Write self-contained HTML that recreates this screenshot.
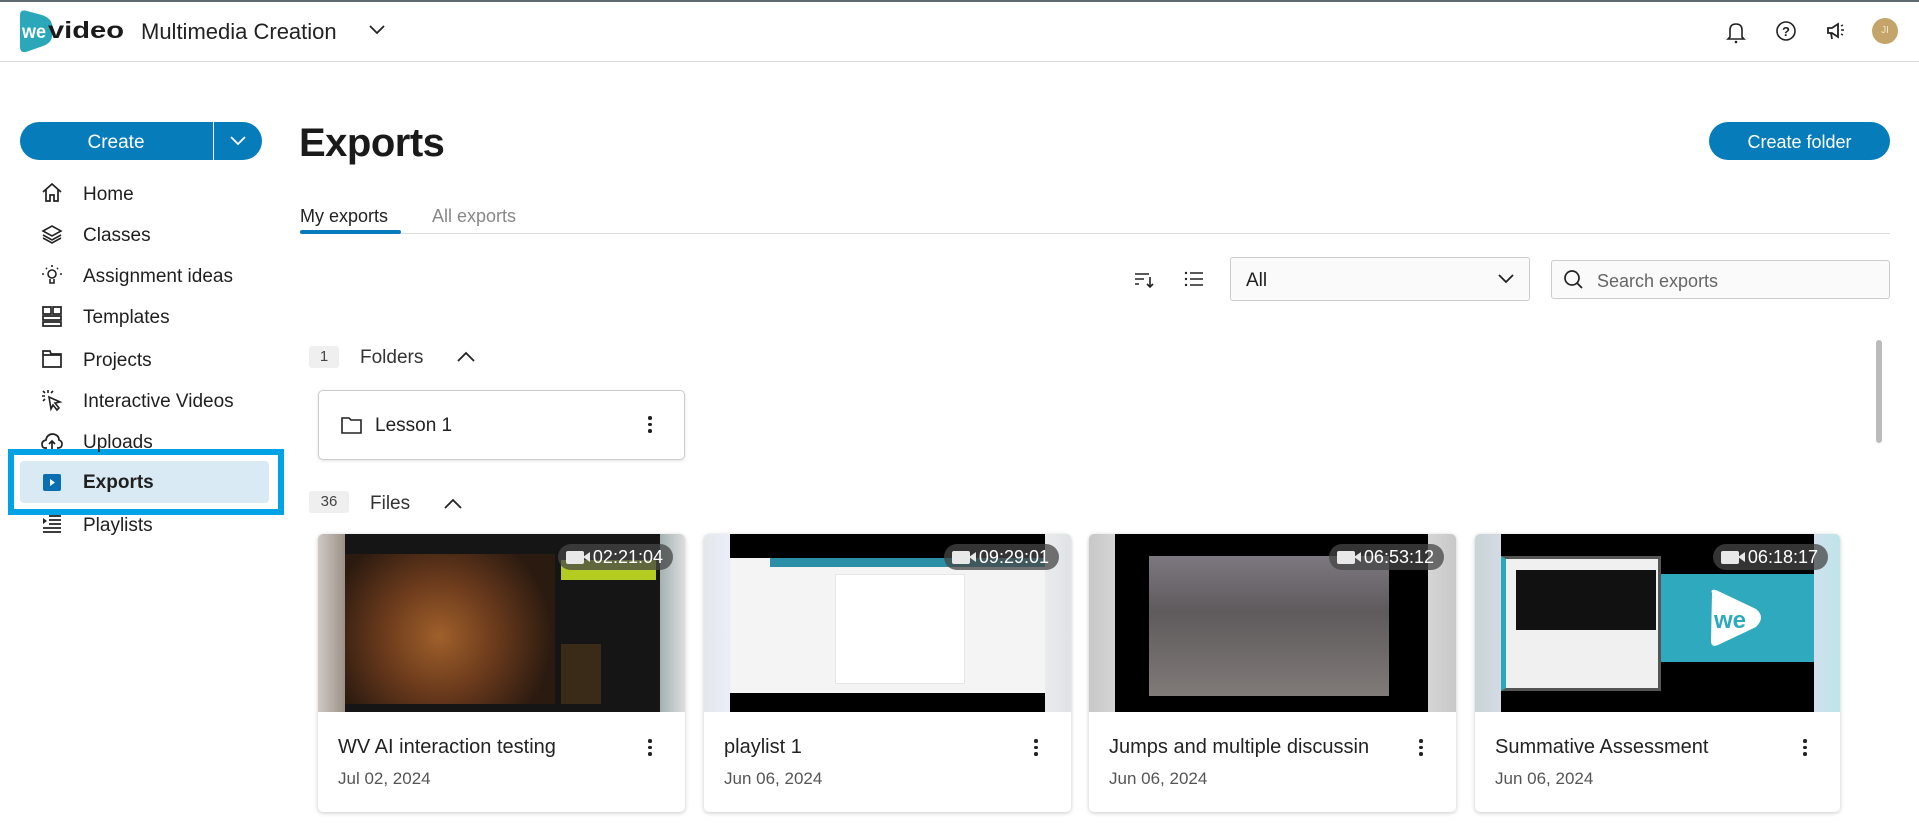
<!DOCTYPE html>
<html><head><meta charset="utf-8"><style>
*{box-sizing:border-box;margin:0;padding:0}
body{width:1919px;height:825px;overflow:hidden;background:#fff;font-family:"Liberation Sans",sans-serif;color:#1f1f1f;position:relative}
.a{position:absolute}
.hdr{left:0;top:0;width:1919px;height:62px;border-top:2px solid #5b6a73;border-bottom:1px solid #dcdcdc}
.nav{left:83px;font-size:19px;color:#1f1f1f;white-space:nowrap}
.ico{left:40px;width:24px;height:24px}
.card{background:#fff;border-radius:5px;box-shadow:0 1px 4px rgba(0,0,0,.22);overflow:hidden}
.thumb{position:absolute;left:0;top:0;width:100%;height:178px;background:#cfd3d3}
.vid{position:absolute;top:0;height:178px}
.dur{position:absolute;right:12px;top:10px;height:26px;padding:0 10px 0 8px;border-radius:13px;background:rgba(70,70,70,.75);color:#fff;font-size:18px;line-height:26px;display:flex;align-items:center;gap:5px}
.cam{width:18px;height:13px;background:#e8e8e8;border-radius:2px;position:relative;margin-right:4px}
.cam:after{content:"";position:absolute;right:-6px;top:1px;border-right:7px solid #e8e8e8;border-top:5px solid transparent;border-bottom:5px solid transparent}
.ct{position:absolute;left:20px;top:202px;font-size:20px;color:#222;white-space:nowrap;width:300px;overflow:hidden}
.cd{position:absolute;left:20px;top:235px;font-size:17px;color:#555}
.dots{position:absolute;right:33px;top:205px;width:4px}
.dots i{display:block;width:3.5px;height:3.5px;border-radius:50%;background:#222;margin-bottom:3px}
.badge{background:#efefef;border-radius:3px;font-size:15px;color:#444;text-align:center;line-height:22px;height:22px}
</style></head><body>
<div class="a hdr"></div>
<svg class="a" style="left:18px;top:9px" width="110" height="44" viewBox="0 0 110 44">
<path d="M2 6 Q2 1 7 1.5 L24 6 Q33 9 34 16 L34 28 Q33 34 25 37 L8 43 Q2 44 2 38 Z" fill="#2aa7b9"/>
<text x="4" y="29" font-family="Liberation Sans" font-weight="bold" font-size="19" fill="#fff" textLength="24" lengthAdjust="spacingAndGlyphs">we</text>
<text x="30" y="29" font-family="Liberation Sans" font-weight="bold" font-size="23" fill="#1a1a1a" textLength="76" lengthAdjust="spacingAndGlyphs">video</text>
</svg>
<div class="a" style="left:141px;top:19px;font-size:22px;color:#222">Multimedia Creation</div>
<svg class="a" style="left:368px;top:24px" width="18" height="12" viewBox="0 0 18 12"><path d="M2 2 L9 9 L16 2" stroke="#222" stroke-width="1.8" fill="none"/></svg>
<svg class="a" style="left:1726px;top:20px" width="20" height="24" viewBox="0 0 20 24"><path d="M4 17 V10 Q4 4 10 4 Q16 4 16 10 V17 L18 19 H2 Z" stroke="#222" stroke-width="1.6" fill="none"/><circle cx="10" cy="22" r="1.3" fill="#222"/></svg>
<svg class="a" style="left:1775px;top:20px" width="22" height="22" viewBox="0 0 22 22"><circle cx="11" cy="11" r="9" stroke="#222" stroke-width="1.6" fill="none"/><text x="11" y="16" text-anchor="middle" font-family="Liberation Sans" font-weight="bold" font-size="13" fill="#222">?</text></svg>
<svg class="a" style="left:1825px;top:20px" width="22" height="22" viewBox="0 0 22 22"><path d="M3 8 H7 L13 4 V17 L7 13 H3 Z M6 13 L7 19" stroke="#222" stroke-width="1.8" fill="none"/><path d="M16 6 l2 -1 M16 10 h3 M16 14 l2 1" stroke="#222" stroke-width="1.5"/></svg>
<div class="a" style="left:1872px;top:18px;width:26px;height:26px;border-radius:50%;background:#c4a468;color:#f3e7cf;font-size:10px;text-align:center;line-height:26px">JI</div>
<div class="a" style="left:20px;top:122px;width:242px;height:38px;border-radius:19px;background:#077cbb"></div>
<div class="a" style="left:20px;top:124px;width:192px;height:38px;color:#fff;font-size:19px;text-align:center;line-height:38px">Create</div>
<div class="a" style="left:213px;top:122px;width:1px;height:38px;background:#fff"></div>
<svg class="a" style="left:229px;top:135px" width="18" height="12" viewBox="0 0 18 12"><path d="M2 2 L9 9 L16 2" stroke="#fff" stroke-width="1.8" fill="none"/></svg>
<div class="a" style="left:8px;top:449px;width:276px;height:66px;border:6px solid #00a2e6"></div>
<div class="a" style="left:20px;top:461px;width:249px;height:42px;background:#d9eaf4;border-radius:4px"></div>
<svg class="a ico" style="top:181px" viewBox="0 0 24 24"><path d="M3 11 L12 3 L21 11 M6 9 V20 H10 V14 H14 V20 H18 V9" stroke="#222" stroke-width="1.7" fill="none"/></svg>
<div class="a nav" style="top:184px">Home</div>
<svg class="a ico" style="top:222px" viewBox="0 0 24 24"><path d="M3 9 L12 4 L21 9 L12 14 Z M3 13 L12 18 L21 13 M3 16 L12 21 L21 16" stroke="#222" stroke-width="1.6" fill="none"/></svg>
<div class="a nav" style="top:225px">Classes</div>
<svg class="a ico" style="top:263px" viewBox="0 0 24 24"><circle cx="12" cy="11" r="4" stroke="#222" stroke-width="1.6" fill="none"/><path d="M10 16 V20 H14 V16 M12 2 V4 M4 11 H2 M22 11 H20 M6 5 L7 6 M18 5 L17 6" stroke="#222" stroke-width="1.6" fill="none"/></svg>
<div class="a nav" style="top:266px">Assignment ideas</div>
<svg class="a ico" style="top:304px" viewBox="0 0 24 24"><path d="M3 3 H11 V10 H3 Z M13 3 H21 V10 H13 Z M3 12 H21 V16 H3 Z M3 18 H21 V22 H3 Z" stroke="#222" stroke-width="1.7" fill="none"/></svg>
<div class="a nav" style="top:307px">Templates</div>
<svg class="a ico" style="top:347px" viewBox="0 0 24 24"><path d="M3 4 H10 L11 7 H21 V20 H3 Z M3 8 H21" stroke="#222" stroke-width="1.7" fill="none"/></svg>
<div class="a nav" style="top:350px">Projects</div>
<svg class="a ico" style="top:388px" viewBox="0 0 24 24"><path d="M9 9 L20 14 L15 15 L19 20 L17 22 L13 17 L11 21 Z M8 2 V5 M2 8 H5 M3 3 L5 5 M13 3 L11 5 M3 13 L5 11" stroke="#222" stroke-width="1.6" fill="none"/></svg>
<div class="a nav" style="top:391px">Interactive Videos</div>
<svg class="a ico" style="top:429px" viewBox="0 0 24 24"><path d="M7 19 H5 Q2 19 2 15 Q2 12 6 11 Q7 5 13 5 Q19 6 19 11 Q22 12 22 15 Q22 19 18 19 H17 M12 20 V12 M9 15 L12 12 L15 15" stroke="#222" stroke-width="1.7" fill="none"/></svg>
<div class="a nav" style="top:432px">Uploads</div>
<svg class="a ico" style="top:470px" viewBox="0 0 24 24"><rect x="3" y="4" width="18" height="17" rx="2" fill="#0a6fb0"/><path d="M10 9 L15 12.5 L10 16 Z" fill="#fff"/></svg>
<div class="a nav" style="top:472px;font-weight:bold">Exports</div>
<svg class="a ico" style="top:512px" viewBox="0 0 24 24"><path d="M3 6 L7 9 L3 12 Z" fill="#222"/><path d="M9 5 H21 M9 9 H21 M9 13 H21 M3 17 H21 M3 21 H21" stroke="#222" stroke-width="1.7" transform="translate(0,-1)"/></svg>
<div class="a nav" style="top:515px">Playlists</div>
<div class="a" style="left:299px;top:121px;font-size:40px;font-weight:bold;color:#1a1a1a;letter-spacing:-0.5px">Exports</div>
<div class="a" style="left:1709px;top:122px;width:181px;height:38px;border-radius:19px;background:#077cbb;color:#fff;font-size:18px;text-align:center;line-height:40px">Create folder</div>
<div class="a" style="left:300px;top:206px;font-size:18px;color:#222">My exports</div>
<div class="a" style="left:432px;top:206px;font-size:18px;color:#888">All exports</div>
<div class="a" style="left:300px;top:233px;width:1590px;height:1px;background:#ddd"></div>
<div class="a" style="left:300px;top:230px;width:101px;height:4px;background:#077cbb;border-radius:2px"></div>
<svg class="a" style="left:1133px;top:270px" width="22" height="20" viewBox="0 0 22 20"><path d="M2 4 H16 M2 9 H11 M2 14 H6 M17 7 V17 M14 14 L17 17 L20 14" stroke="#222" stroke-width="1.6" fill="none"/></svg>
<svg class="a" style="left:1183px;top:270px" width="22" height="20" viewBox="0 0 22 20"><path d="M7 3 H20 M7 9 H20 M7 15 H20" stroke="#222" stroke-width="1.6"/><circle cx="3" cy="3" r="1.2" fill="#222"/><circle cx="3" cy="9" r="1.2" fill="#222"/><circle cx="3" cy="15" r="1.2" fill="#222"/></svg>
<div class="a" style="left:1230px;top:257px;width:300px;height:44px;border:1px solid #ccc;border-radius:3px;background:#fafafa;font-size:19px;line-height:45px;padding-left:15px">All</div>
<svg class="a" style="left:1497px;top:273px" width="18" height="12" viewBox="0 0 18 12"><path d="M2 2 L9 9 L16 2" stroke="#222" stroke-width="1.8" fill="none"/></svg>
<div class="a" style="left:1551px;top:260px;width:339px;height:39px;border:1px solid #ccc;border-radius:3px;background:#fafafa;font-size:18px;line-height:40px;padding-left:45px;color:#666">Search exports</div>
<svg class="a" style="left:1563px;top:269px" width="22" height="22" viewBox="0 0 22 22"><circle cx="9" cy="9" r="7" stroke="#222" stroke-width="1.7" fill="none"/><path d="M14 14 L19 19" stroke="#222" stroke-width="1.8"/></svg>
<div class="a" style="left:1876px;top:340px;width:6px;height:103px;background:#bbb;border-radius:3px"></div>
<div class="a badge" style="left:309px;top:346px;width:30px">1</div>
<div class="a" style="left:360px;top:347px;font-size:19px;color:#333">Folders</div>
<svg class="a" style="left:456px;top:351px" width="20" height="12" viewBox="0 0 20 12"><path d="M2 10 L10 2 L18 10" stroke="#222" stroke-width="1.8" fill="none"/></svg>
<div class="a" style="left:318px;top:390px;width:367px;height:70px;border:1px solid #ccc;border-radius:5px;box-shadow:0 1px 3px rgba(0,0,0,.12)"></div>
<svg class="a" style="left:341px;top:416px" width="22" height="18" viewBox="0 0 22 18"><path d="M1 2 H8 L10 4 H20 V17 H1 Z" stroke="#222" stroke-width="1.6" fill="none"/></svg>
<div class="a" style="left:375px;top:415px;font-size:19px;color:#222">Lesson 1</div>
<div class="a dots" style="left:648px;top:416px;right:auto"><i></i><i></i><i></i></div>
<div class="a badge" style="left:309px;top:491px;width:40px">36</div>
<div class="a" style="left:370px;top:493px;font-size:19px;color:#333">Files</div>
<svg class="a" style="left:443px;top:498px" width="20" height="12" viewBox="0 0 20 12"><path d="M2 10 L10 2 L18 10" stroke="#222" stroke-width="1.8" fill="none"/></svg>
<div class="a card" style="left:318px;top:534px;width:367px;height:278px">
 <div class="thumb" style="background:linear-gradient(90deg,#cfc9c5,#8a7d72 10%,#222 14%,#222 86%,#9aa 92%,#ddd)"></div>
 <div class="vid" style="left:27px;width:315px;background:#151515">
  <div style="position:absolute;left:0;top:20px;width:210px;height:150px;background:radial-gradient(circle at 45% 55%,#a0602a,#6a3a1c 40%,#2b1a10 80%)"></div>
  <div style="position:absolute;left:216px;top:26px;width:95px;height:20px;background:#b4cc22"></div>
  <div style="position:absolute;left:216px;top:110px;width:40px;height:60px;background:#3a2a18"></div>
 </div>
 <div class="dur"><span class="cam"></span>02:21:04</div>
 <div class="ct">WV AI interaction testing</div><div class="cd">Jul 02, 2024</div>
 <div class="dots"><i></i><i></i><i></i></div>
</div>
<div class="a card" style="left:704px;top:534px;width:367px;height:278px">
 <div class="thumb" style="background:linear-gradient(90deg,#e4e8ea,#eef 10%,#eee 90%,#dfe3e5)"></div>
 <div class="vid" style="left:26px;width:315px;background:#000">
  <div style="position:absolute;left:0;top:24px;width:315px;height:135px;background:#f4f4f4"></div>
  <div style="position:absolute;left:40px;top:24px;width:275px;height:9px;background:#2b8fa8"></div>
  <div style="position:absolute;left:105px;top:40px;width:130px;height:110px;background:#fff;border:1px solid #e6e6e6"></div>
 </div>
 <div class="dur"><span class="cam"></span>09:29:01</div>
 <div class="ct">playlist 1</div><div class="cd">Jun 06, 2024</div>
 <div class="dots"><i></i><i></i><i></i></div>
</div>
<div class="a card" style="left:1089px;top:534px;width:367px;height:278px">
 <div class="thumb" style="background:linear-gradient(90deg,#c8c8c8,#ddd 12%,#ddd 88%,#c8c8c8)"></div>
 <div class="vid" style="left:26px;width:313px;background:#000">
  <div style="position:absolute;left:34px;top:22px;width:240px;height:140px;background:linear-gradient(180deg,#7c7880,#5f5a5c 40%,#807a78)"></div>
 </div>
 <div class="dur"><span class="cam"></span>06:53:12</div>
 <div class="ct">Jumps and multiple discussin</div><div class="cd">Jun 06, 2024</div>
 <div class="dots"><i></i><i></i><i></i></div>
</div>
<div class="a card" style="left:1475px;top:534px;width:365px;height:278px">
 <div class="thumb" style="background:linear-gradient(90deg,#c9d5d6,#dde 12%,#dde 86%,#bfe4ea)"></div>
 <div class="vid" style="left:26px;width:313px;background:#000">
  <div style="position:absolute;left:0;top:22px;width:160px;height:135px;background:#f0f0f0;border:3px solid #555;border-left:5px solid #2aa7b9"></div>
  <div style="position:absolute;left:15px;top:36px;width:140px;height:60px;background:#111"></div>
  <div style="position:absolute;left:160px;top:40px;width:153px;height:88px;background:#2ea9bd"></div>
  <svg style="position:absolute;left:205px;top:53px" width="62" height="62" viewBox="0 0 62 62"><path d="M6 6 Q4 2 10 3 L50 22 Q60 30 50 40 L12 58 Q5 61 5 54 Z" fill="#fff"/><text x="8" y="41" font-family="Liberation Sans" font-weight="bold" font-size="24" fill="#2ea9bd">we</text></svg>
 </div>
 <div class="dur"><span class="cam"></span>06:18:17</div>
 <div class="ct">Summative Assessment</div><div class="cd">Jun 06, 2024</div>
 <div class="dots"><i></i><i></i><i></i></div>
</div>
</body></html>
